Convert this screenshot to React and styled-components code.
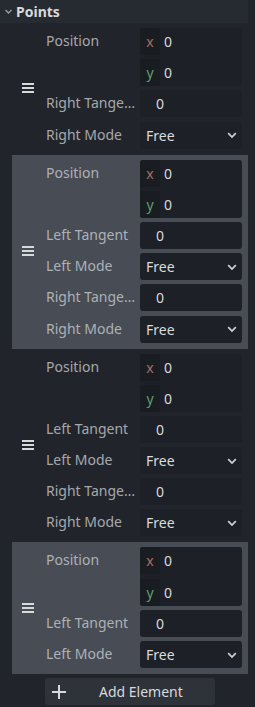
import React from "react";
import styled, { createGlobalStyle } from "styled-components";

const Global = createGlobalStyle`
  html, body { margin: 0; padding: 0; background: #21252b; }
  body { font-family: "Noto Sans", "DejaVu Sans", sans-serif; font-size: 14px; color: #cfd1d4; }
  * { box-sizing: border-box; }
`;

const Page = styled.div`
  width: 255px;
  height: 707px;
  overflow: hidden;
  display: flex;
  flex-direction: column;
  background: #21252b;
`;

const Header = styled.div`
  height: 23px;
  width: 248px;
  flex: none;
  display: flex;
  align-items: center;
  gap: 3px;
  padding-left: 4px;
  background: #262a31;
  font-weight: 700;
  color: #d7d9dc;
  font-size: 14px;
`;

const List = styled.div`
  display: flex;
  flex-direction: column;
  padding-left: 12px;
  width: 248px;
`;

const Item = styled.div`
  display: flex;
  align-items: stretch;
  padding: 5px 6px 6px 0;
  background: ${(p) => (p.$hl ? "#474c55" : "#21252b")};
`;

const HandleCol = styled.div`
  width: 34px;
  flex: none;
  display: flex;
  align-items: center;
  justify-content: center;
  padding-right: 2px;
`;

const Props = styled.div`
  width: 196px;
  display: flex;
  flex-direction: column;
  gap: 4.2px;
`;

const Row = styled.div`
  display: flex;
  align-items: flex-start;
`;

const Label = styled.div`
  width: 94px;
  flex: none;
  height: 27px;
  line-height: 26px;
  padding-right: 3px;
  white-space: nowrap;
  overflow: hidden;
  text-overflow: ellipsis;
  color: ${(p) => (p.$hl ? "#aeb1b5" : "#a6a8ab")};
`;

const Field = styled.div`
  width: 102px;
  height: 27px;
  border-radius: 3px;
  background: #1d2026;
  color: #d9dadc;
  display: flex;
  align-items: center;
  padding-left: ${(p) => p.$pad || 16}px;
  padding-right: 5px;
  justify-content: space-between;
`;

const Vector = styled.div`
  width: 102px;
  border-radius: 3px;
  background: #1d2026;
  display: flex;
  flex-direction: column;
  gap: 4.2px;
`;

const VecRow = styled.div`
  height: 27px;
  display: flex;
  align-items: center;
  color: #d9dadc;
`;

const Axis = styled.div`
  width: 20px;
  height: 27px;
  border-radius: 3px;
  background: #191c21;
  display: flex;
  align-items: center;
  justify-content: center;
  margin-right: 4px;
  color: ${(p) => (p.$axis === "x" ? "#a87063" : "#5f9f6d")};
`;

const ButtonRow = styled.div`
  display: flex;
  padding: 4px 0 0 45px;
  height: 31px;
  flex: none;
`;

const AddButton = styled.div`
  width: 170px;
  height: 27px;
  border-radius: 3px;
  background: #2e3239;
  display: flex;
  align-items: center;
  padding-left: 7px;
  color: #d7d9dc;
`;

const AddText = styled.span`
  margin-left: 33px;
`;

const Bottom = styled.div`
  flex: 1;
  background: #2a2e35;
  margin-top: 2px;
`;

const Handle = () => (
  <svg width="12" height="10" viewBox="0 0 12 10">
    <rect x="0" y="0" width="12" height="2" fill="#d8d9db" />
    <rect x="0" y="4" width="12" height="2" fill="#d8d9db" />
    <rect x="0" y="8" width="12" height="2" fill="#d8d9db" />
  </svg>
);

const Chevron = () => (
  <svg width="10" height="10" viewBox="0 0 10 10">
    <path d="M1.2 3.2 L5 7 L8.8 3.2" stroke="#d0d2d5" strokeWidth="1.7" fill="none" />
  </svg>
);

const SmallChevron = () => (
  <svg width="9" height="9" viewBox="0 0 9 9">
    <path d="M1.5 3 L4.5 6 L7.5 3" stroke="#9a9da2" strokeWidth="1.4" fill="none" />
  </svg>
);

const Plus = () => (
  <svg width="14" height="14" viewBox="0 0 14 14">
    <rect x="6" y="0" width="2" height="14" fill="#d8d9db" />
    <rect x="0" y="6" width="14" height="2" fill="#d8d9db" />
  </svg>
);

const PointItem = ({ hl, left, right }) => (
  <Item $hl={hl}>
    <HandleCol>
      <Handle />
    </HandleCol>
    <Props>
      <Row>
        <Label $hl={hl}>Position</Label>
        <Vector>
          <VecRow>
            <Axis $axis="x">x</Axis>0
          </VecRow>
          <VecRow>
            <Axis $axis="y">y</Axis>0
          </VecRow>
        </Vector>
      </Row>
      {left && (
        <>
          <Row>
            <Label $hl={hl}>Left Tangent</Label>
            <Field>0</Field>
          </Row>
          <Row>
            <Label $hl={hl}>Left Mode</Label>
            <Field $pad={6}>
              Free
              <Chevron />
            </Field>
          </Row>
        </>
      )}
      {right && (
        <>
          <Row>
            <Label $hl={hl}>Right Tangent</Label>
            <Field>0</Field>
          </Row>
          <Row>
            <Label $hl={hl}>Right Mode</Label>
            <Field $pad={6}>
              Free
              <Chevron />
            </Field>
          </Row>
        </>
      )}
    </Props>
  </Item>
);

export default function App() {
  return (
    <>
      <Global />
      <Page>
        <Header>
          <SmallChevron />
          Points
        </Header>
        <List>
          <PointItem right />
          <PointItem hl left right />
          <PointItem left right />
          <PointItem hl left />
        </List>
        <ButtonRow>
          <AddButton>
            <Plus />
            <AddText>Add Element</AddText>
          </AddButton>
        </ButtonRow>
        <Bottom />
      </Page>
    </>
  );
}
